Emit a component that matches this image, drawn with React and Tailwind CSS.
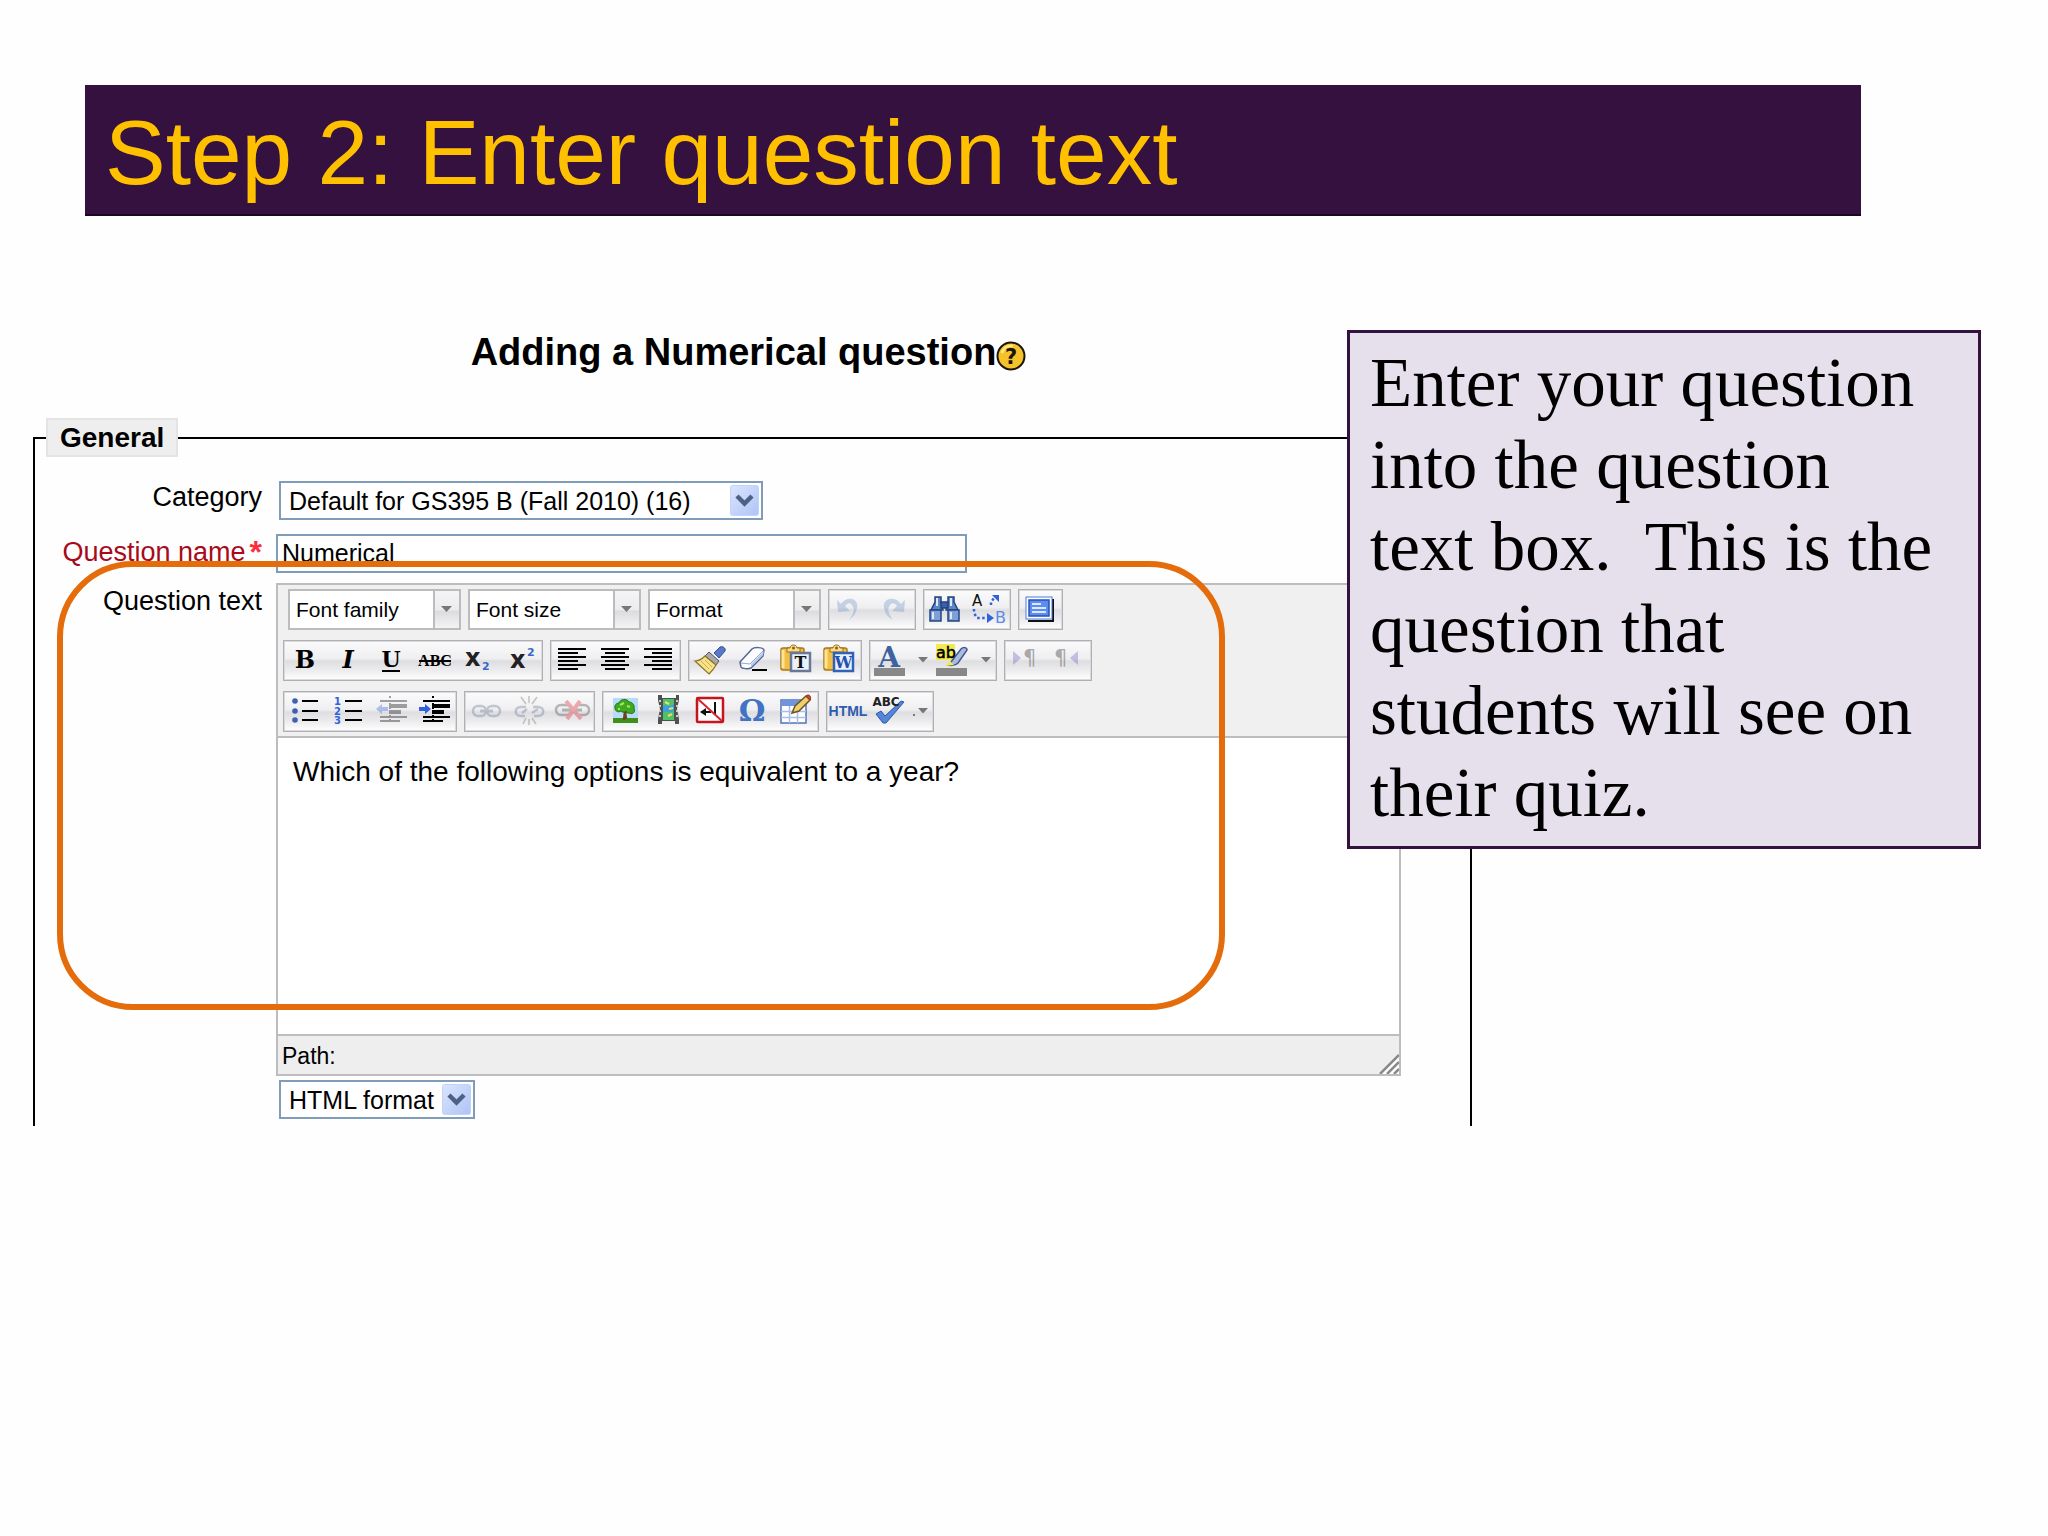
import React from "react";

const BLUE = "#3a66c8";

function Icon({ children, faded }) {
  return (
    <svg viewBox="0 0 43 39" className={faded ? "h-[39px] w-[43px] opacity-35" : "h-[39px] w-[43px]"} aria-hidden="true">
      {children}
    </svg>
  );
}

function Tool({ label, children, faded }) {
  return (
    <button type="button" aria-label={label} title={label} className="block">
      <Icon faded={faded}>{children}</Icon>
    </button>
  );
}

function MoreArrow({ label, dot }) {
  return (
    <button type="button" aria-label={label} className="block">
      <svg viewBox="0 0 20 39" className="h-[39px] w-5" aria-hidden="true">
        {dot && <rect x="0" y="22" width="2" height="2" fill="#777" />}
        <path d="M5 16h10l-5 5.5z" fill="#777" />
      </svg>
    </button>
  );
}

function Group({ children }) {
  return (
    <div className="flex border border-[#b0b0b4] bg-[linear-gradient(#fbfbfc_0%,#efeff1_45%,#dedee2_52%,#ececee_75%,#ffffff_100%)] shadow-[inset_0_0_0_1px_#dadade]">
      {children}
    </div>
  );
}

function ListBox({ label }) {
  return (
    <div className="relative w-[173px]">
      <select
        aria-label={label}
        className="h-[41px] w-full appearance-none border-2 border-[#bcbcc0] bg-white pl-1.5 text-[21px] text-black"
      >
        <option>{label}</option>
      </select>
      <svg viewBox="0 0 26 37" className="pointer-events-none absolute top-0.5 right-0.5 h-[37px] w-[26px] bg-[linear-gradient(#f4f4f5_0%,#ececee_50%,#dcdce0_55%,#f4f4f5_100%)]" aria-hidden="true">
        <rect width="2" height="37" fill="#bcbcc0" />
        <path d="M8 15h11l-5.500 6z" fill="#777" />
      </svg>
    </div>
  );
}

function XpSelect({ id, label, value, className }) {
  return (
    <div className={className}>
      <select
        id={id}
        aria-label={label}
        className="h-[39px] w-full appearance-none border-2 border-[#7f9db9] bg-white pl-2 text-[25px] text-black"
      >
        <option>{value}</option>
      </select>
      <svg viewBox="0 0 29 31" className="pointer-events-none absolute top-1 right-1 h-[31px] w-[29px]" aria-hidden="true">
        <defs>
          <linearGradient id={id + "-g"} x1="0" y1="0" x2="1" y2="1">
            <stop offset="0" stopColor="#dbe5fe" />
            <stop offset="1" stopColor="#aec3f6" />
          </linearGradient>
        </defs>
        <rect x="0.5" y="0.5" width="28" height="30" rx="2" fill={"url(#" + id + "-g)"} stroke="#c3d2f8" />
        <path d="M7 11l7.500 7.500L22 11" fill="none" stroke="#4d6185" strokeWidth="4.500" />
      </svg>
    </div>
  );
}

const slab = '"DejaVu Serif", serif';
const heavy = '"DejaVu Sans", sans-serif';

function AlignIcon({ shorts }) {
  return (
    <g fill="#000">
      {[7, 15, 23].map((y) => (
        <rect key={y} x="7" y={y} width="28" height="2" />
      ))}
      {[11, 19, 27].map((y) => (
        <rect key={y} x={shorts} y={y} width="20" height="2" />
      ))}
    </g>
  );
}

function IndentLines({ arrow }) {
  return (
    <g>
      <g fill="#000">
        <rect x="10" y="8" width="27" height="2" />
        <rect x="19" y="12" width="18" height="4" />
        <rect x="19" y="18" width="12" height="4" />
        <rect x="10" y="24" width="27" height="2" />
        <rect x="10" y="28" width="20" height="2" />
        <path d="M20 4v3M20 11v20" stroke="#000" strokeWidth="2" strokeDasharray="2 2" />
      </g>
      <path d={arrow} fill="#2f62dc" />
    </g>
  );
}

function ChainLinks() {
  return (
    <g fill="none" stroke="#66748f" strokeWidth="2.500">
      <rect x="8" y="14" width="13" height="10" rx="5" />
      <rect x="22" y="14" width="13" height="10" rx="5" />
      <path d="M15 19h13" strokeWidth="3" />
    </g>
  );
}

function Clipboard({ letter, color, border }) {
  return (
    <g>
      <rect x="6" y="7" width="23" height="22" rx="2" fill="#f1bf45" stroke="#a9781d" strokeWidth="1.500" />
      <path d="M8 9v18" stroke="#ffe59a" strokeWidth="3" />
      <path d="M12 11V7h3c0-4 7-4 7 0h3v4z" fill="#f9dc8c" stroke="#9a6d1a" />
      <circle cx="18.500" cy="7" r="1.500" fill="#8a6014" />
      <rect x="16" y="12" width="19" height="18" fill="#eaf1fb" stroke={border} strokeWidth="2.500" />
      <text x="25.500" y="27" textAnchor="middle" fontFamily={slab} fontWeight="bold" fontSize="16" fill={color}>
        {letter}
      </text>
    </g>
  );
}

function Toolbar() {
  return (
    <div className="flex flex-col gap-[10px] border-b-2 border-[#bdbdc0] bg-[#f0f0f1] pt-1 pb-1 pl-[5px]">
      <div className="flex gap-[7px] pl-[5px]">
        <ListBox label="Font family" />
        <ListBox label="Font size" />
        <ListBox label="Format" />
        <Group>
          <Tool label="Undo" faded>
            <path d="M12 14C18 5 30 8 28 18c-1 6-4 9-8 12 5-7 6-11 3-15-2-3-5-2-7 1l5 5-12 1-1-12z" fill="#7093c8" />
          </Tool>
          <Tool label="Redo" faded>
            <path d="M29 14C23 5 10 8 12 18c1 6 4 9 9 12-5-7-6-11-3-15 2-3 5-2 7 1l-5 5 12 1 1-12z" fill="#7093c8" />
          </Tool>
        </Group>
        <Group>
          <Tool label="Find">
            <g stroke="#23447f" strokeWidth="1.500">
              <path d="M11 7h6v5l2 8H7l4-8zM24 7h6v5l4 8H22l2-8z" fill="#5f86c4" />
              <rect x="17" y="12" width="7" height="6" fill="#3a5fa5" />
              <rect x="6" y="20" width="11" height="11" fill="#7ea0d6" />
              <rect x="24" y="20" width="11" height="11" fill="#7ea0d6" />
            </g>
            <path d="M9 22v7M27 22v7M13 8v8M27 8v8" stroke="#dce8fa" strokeWidth="2" />
          </Tool>
          <Tool label="Find and replace">
            <text x="5" y="16" fontFamily={heavy} fontSize="15" fill="#111">A</text>
            <text x="28" y="33" fontFamily={heavy} fontSize="16" fill="#5c8be8">B</text>
            <path d="M7 19v4l3 5h9M24 15v-3l3-4" fill="none" stroke="#2f62dc" strokeWidth="2.500" strokeDasharray="2.500 2.500" />
            <path d="M20 23l7 5-7 5zM25 5h7v7z" fill="#2f62dc" />
          </Tool>
        </Group>
        <Group>
          <Tool label="Toggle fullscreen mode">
            <path d="M9 31h25V9" fill="none" stroke="#111" strokeWidth="2" />
            <rect x="7" y="7" width="26" height="22" fill="#fff" stroke="#4a7be0" />
            <rect x="10" y="10" width="20" height="16" fill="#5b8df0" stroke="#2552b8" strokeWidth="1.500" />
            <path d="M13 14h9M13 18h14M13 22h14" stroke="#dce8ff" strokeWidth="2" />
          </Tool>
        </Group>
      </div>

      <div className="flex gap-[7px]">
        <Group>
          <Tool label="Bold">
            <text x="21" y="27" textAnchor="middle" fontFamily={slab} fontWeight="bold" fontSize="24">B</text>
          </Tool>
          <Tool label="Italic">
            <text x="21" y="27" textAnchor="middle" fontFamily={slab} fontWeight="bold" fontStyle="italic" fontSize="24">I</text>
          </Tool>
          <Tool label="Underline">
            <text x="21" y="26" textAnchor="middle" fontFamily={slab} fontWeight="bold" fontSize="22">U</text>
            <rect x="12" y="29" width="18" height="2" />
          </Tool>
          <Tool label="Strikethrough">
            <text x="22" y="25" textAnchor="middle" fontFamily='"Liberation Serif", serif' fontWeight="bold" fontSize="16">ABC</text>
            <rect x="6" y="19" width="32" height="2" />
          </Tool>
          <Tool label="Subscript">
            <text x="9" y="25" fontFamily={heavy} fontWeight="bold" fontSize="24" fill="#222">x</text>
            <text x="26" y="29" fontFamily={heavy} fontWeight="bold" fontSize="11" fill={BLUE}>2</text>
          </Tool>
          <Tool label="Superscript">
            <text x="11" y="27" fontFamily={heavy} fontWeight="bold" fontSize="24" fill="#222">x</text>
            <text x="28" y="15" fontFamily={heavy} fontWeight="bold" fontSize="11" fill={BLUE}>2</text>
          </Tool>
        </Group>
        <Group>
          <Tool label="Align left"><AlignIcon shorts={7} /></Tool>
          <Tool label="Align center"><AlignIcon shorts={11} /></Tool>
          <Tool label="Align right"><AlignIcon shorts={15} /></Tool>
        </Group>
        <Group>
          <Tool label="Cleanup messy code">
            <path d="M25 12l6-6c3-1 6 1 5 4l-6 7z" fill="#5a78c8" stroke="#34509a" />
            <path d="M20 11l10 9-3 4-11-9z" fill="#a8a9b0" stroke="#555" />
            <path d="M16 15l11 9c-2 4-5 7-7 9L6 20c4 0 7-2 10-5z" fill="#f7e28c" stroke="#8c7424" strokeWidth="1.200" />
            <path d="M12 20l8 8M16 19l7 7" stroke="#cdae4a" />
          </Tool>
          <Tool label="Remove formatting">
            <path d="M8 21L20 8c2-2 11-2 12 1l-1 6-12 12c-2 1-9 1-10-1z" fill="#fdfdff" stroke="#566795" strokeWidth="1.500" strokeLinejoin="round" />
            <path d="M19 26l12-12 1-4-13 13z" fill="#b7c8ee" />
            <path d="M9 22l9 1 13-13" fill="none" stroke="#91a7d6" />
            <rect x="20" y="28" width="15" height="2" />
          </Tool>
          <Tool label="Paste as plain text"><Clipboard letter="T" color="#111" border="#6a7896" /></Tool>
          <Tool label="Paste from Word"><Clipboard letter="W" color="#2450ae" border="#2f62b8" /></Tool>
        </Group>
        <Group>
          <Tool label="Text color">
            <text x="19" y="26" textAnchor="middle" fontFamily={slab} fontWeight="bold" fontSize="28" fill="#3c629f">A</text>
            <rect x="4" y="27" width="31" height="8" fill="#888" />
          </Tool>
          <MoreArrow label="More text colors" />
          <Tool label="Background color">
            <rect x="3" y="3" width="19" height="16" fill="#f3ea4e" />
            <path d="M18 21L28 8c2-2 6-2 6 1L25 22c-2 2-7 3-10 2z" fill="#a9bce6" stroke="#47598c" strokeWidth="1.500" />
            <path d="M12 25l5-5 4 4z" fill="#f3ea4e" />
            <text x="3" y="17" fontFamily={heavy} fontSize="16" fill="#000" stroke="#000" strokeWidth="0.500">ab</text>
            <rect x="3" y="27" width="31" height="8" fill="#888" />
          </Tool>
          <MoreArrow label="More background colors" />
        </Group>
        <Group>
          <Tool label="Left to right" faded>
            <path d="M8 10l8 7-8 7z" fill="#6a62c0" />
            <text x="18" y="24" fontFamily={heavy} fontSize="21" fill="#222">¶</text>
          </Tool>
          <Tool label="Right to left" faded>
            <path d="M30 10l-8 7 8 7z" fill="#6a62c0" />
            <text x="6" y="24" fontFamily={heavy} fontSize="21" fill="#222">¶</text>
          </Tool>
        </Group>
      </div>

      <div className="flex gap-[7px]">
        <Group>
          <Tool label="Bulleted list">
            {[9, 19, 28].map((y) => (
              <g key={y}>
                <circle cx="11" cy={y} r="2.800" fill="#3d60b0" />
                <rect x="18" y={y - 1} width="16" height="2" />
              </g>
            ))}
          </Tool>
          <Tool label="Numbered list">
            {[9, 19, 28].map((y, i) => (
              <g key={y}>
                <text x="7" y={y + 4} fontFamily={heavy} fontWeight="bold" fontSize="10" fill="#2f62dc">{i + 1}</text>
                <rect x="18" y={y - 1} width="17" height="2" />
              </g>
            ))}
          </Tool>
          <Tool label="Outdent" faded><IndentLines arrow="M6 17l6-5v3h6v4h-6v3z" /></Tool>
          <Tool label="Indent"><IndentLines arrow="M18 17l-6-5v3H6v4h6v3z" /></Tool>
        </Group>
        <Group>
          <Tool label="Insert link" faded><ChainLinks /></Tool>
          <Tool label="Unlink" faded>
            <g fill="none" stroke="#66748f" strokeWidth="2.500">
              <path d="M18 15h-5c-7 0-7 9 0 9h4M25 15h5c7 0 7 9 0 9h-4" />
              <path d="M19 17l-5 4M24 21l6-4" />
            </g>
            <path d="M21 4v7M13 5l5 7M29 5l-5 7M21 27v6M15 32l3-6M28 32l-4-6" stroke="#666" strokeWidth="1.500" />
          </Tool>
          <Tool label="Prevent automatic linking" faded>
            <g fill="none" stroke="#444" strokeWidth="2.500">
              <rect x="5" y="13" width="15" height="10" rx="5" />
              <rect x="23" y="13" width="15" height="10" rx="5" />
              <path d="M11 18h20" strokeWidth="3" />
            </g>
            <path d="M15 9l15 18M29 9L16 27" stroke="#e0202c" strokeWidth="4" />
          </Tool>
        </Group>
        <Group>
          <Tool label="Insert image">
            <rect x="10" y="6" width="25" height="25" fill="#b6dcfa" />
            <rect x="10" y="26" width="25" height="5" fill="#3f8f1c" />
            <path d="M21 28l1-8-5-4M22 21l6-4M23 27l-1-7" stroke="#6b4320" strokeWidth="2.500" fill="none" />
            <path d="M12 16c-1-4 3-5 4-5 1-4 8-5 10-1 4 0 6 4 5 7 2 3-2 6-4 4-2 1-4-1-4-2-2 2-5 1-5 0-3 2-6 0-6-3z" fill="#3fa81e" stroke="#25710f" />
            <path d="M17 13l4-2M24 14l3 1M15 17h2" stroke="#a6e466" strokeWidth="2" />
          </Tool>
          <Tool label="Insert media">
            <path d="M12 3h4v3h14V3h3v5l-2 9 2 10v5h-4v-3H16v3h-4v-5l2-10-2-9z" fill="#4b5250" />
            <rect x="17" y="7" width="11" height="21" fill="#51c06b" />
            <path d="M17 14c4-3 5 3 11-2v7c-5 3-7-1-11 2z" fill="#3d9fe0" />
            <path d="M19 10l4 2M22 24l4-2M23 17l4-1" stroke="#e5e35a" strokeWidth="2" />
            <path d="M14 8v20M31 8v20" stroke="#c8cccb" strokeWidth="2" strokeDasharray="2 3" />
          </Tool>
          <Tool label="Insert non-breaking space">
            <rect x="8" y="6" width="26" height="24" rx="1" fill="#fff" stroke="#c4161c" strokeWidth="2.500" />
            <path d="M26 10v12M12 20h10" fill="none" stroke="#111" strokeWidth="2" />
            <path d="M11 20l6-4v8z" fill="#111" />
            <path d="M9 7l24 22" stroke="#d8232a" strokeWidth="2" />
          </Tool>
          <Tool label="Insert custom character">
            <text x="20" y="29" textAnchor="middle" fontFamily={slab} fontWeight="bold" fontSize="30" fill="#4172c4">Ω</text>
          </Tool>
          <Tool label="Edit table">
            <rect x="6" y="8" width="25" height="23" fill="#fff" stroke="#5374b8" strokeWidth="1.500" />
            <rect x="7" y="9" width="23" height="5" fill="#6d96de" />
            <path d="M6 19.500h25M6 25.500h25M14.500 14v17M22.500 14v17" stroke="#a8c0e8" strokeWidth="1.500" />
            <path d="M17 21l3-7L31 4l4 4-11 11z" fill="#f0cf6c" stroke="#6b5623" strokeWidth="1.500" />
            <path d="M31 4c3-3 6 1 4 4z" fill="#c64a32" stroke="#8c3020" />
          </Tool>
        </Group>
        <Group>
          <Tool label="Edit HTML source">
            <text x="21" y="24" textAnchor="middle" fontFamily='"Liberation Sans", sans-serif' fontWeight="bold" fontSize="14" fill="#2f5cae">HTML</text>
          </Tool>
          <Tool label="Toggle spellchecker">
            <path d="M6 22l5-3 4 5L31 9l3 1-18 21h-3z" fill="#5585d8" stroke="#2c57a8" />
            <text x="16" y="14" textAnchor="middle" fontFamily={heavy} fontWeight="bold" fontSize="12" fill="#222">ABC</text>
          </Tool>
          <MoreArrow label="Spellchecker languages" dot />
        </Group>
      </div>
    </div>
  );
}

function Editor() {
  return (
    <div className="border-2 border-[#bdbdc0] bg-[#f0f0f1]">
      <Toolbar />
      <textarea
        id="question-text"
        className="block h-[296px] w-full resize-none bg-white pt-[18px] pl-[15px] text-[28px] leading-8 text-black outline-none"
        defaultValue="Which of the following options is equivalent to a year?"
      />
      <div className="flex h-10 items-end justify-between border-t-2 border-[#bdbdc0] bg-[#eeeeee]">
        <span className="pb-1 pl-1 text-[23px] leading-7">Path:</span>
        <svg viewBox="0 0 20 20" className="h-5 w-5" aria-hidden="true">
          <path d="M20 0V20H0z" fill="#fff" />
          <path d="M1 20L20 1M8 20L20 8M15 20l5-5" stroke="#8a8a8a" strokeWidth="2.500" />
        </svg>
      </div>
    </div>
  );
}

export default function App() {
  return (
    <div className="min-h-screen bg-[#fefefe] pt-[85px] font-['Liberation_Sans',Arial,sans-serif] text-black">
      <header className="mr-[187px] ml-[85px] border-b-2 border-[#1d0527] bg-[#351140] pt-4 pb-[9px] pl-5">
        <h1 className="text-[91px] leading-[104px] text-[#ffc000]">Step 2: Enter question text</h1>
      </header>

      <main className="relative pt-28">
        <form className="mr-[576px] ml-[33px]">
          <h2 className="flex items-center justify-center pr-2 text-[38px] leading-[48px] font-bold">
            Adding a Numerical question
            <button type="button" aria-label="Help" className="mt-2">
              <svg viewBox="0 0 30 30" className="h-[30px] w-[30px]" aria-hidden="true">
                <circle cx="15" cy="15" r="13.500" fill="#f5c22b" stroke="#1c1606" strokeWidth="2" />
                <path d="M6 12c1-5 6-8 11-7" fill="none" stroke="#ffe88a" strokeWidth="2.500" />
                <text x="15" y="23" textAnchor="middle" fontFamily={heavy} fontWeight="bold" fontSize="21" fill="#1a1405">?</text>
              </svg>
            </button>
          </h2>

          <fieldset className="mt-[42px] border-2 border-b-0 border-black pr-[69px] pb-[7px] pl-[11px]">
            <legend className="border-2 border-[#e4e4e4] bg-[#eeeeee] px-3 text-[28px] leading-[35px] font-bold">General</legend>
            <div className="grid grid-cols-[216px_minmax(0,1fr)] gap-x-[14px] pt-6 text-[27px] leading-8">
              <label htmlFor="category" className="text-right">Category</label>
              <XpSelect id="category" label="Category" value="Default for GS395 B (Fall 2010) (16)" className="relative mb-[14px] ml-[3px] w-[484px]" />

              <label htmlFor="question-name" className="flex justify-end gap-1 pt-0.5 text-[#a80a1c]">
                Question name<span className="text-[32px] font-bold text-[#f8303c]">*</span>
              </label>
              <input
                id="question-name"
                type="text"
                defaultValue="Numerical"
                className="mb-[10px] h-[39px] w-[691px] border-2 border-[#7f9db9] bg-white pl-1 text-[25px] outline-none"
              />

              <label htmlFor="question-text" className="pt-0.5 text-right">Question text</label>
              <div>
                <Editor />
                <XpSelect id="format" label="Text format" value="HTML format" className="relative mt-1 ml-[3px] w-[196px]" />
              </div>
            </div>
          </fieldset>
        </form>

        <div className="pointer-events-none absolute top-[345px] right-[823px] left-[57px] h-[449px] rounded-[76px] border-[6px] border-[#e46c0a]" />

        <aside className="absolute top-[114px] right-[67px] w-[634px] border-[3px] border-[#351140] bg-[#e6e0ec] pt-[9px] pr-9 pb-3 pl-5 font-['Liberation_Serif','Times_New_Roman',serif] text-[69px] leading-[82px]">
          Enter your question into the question text box.&nbsp; This is the question that students will see on their quiz.
        </aside>
      </main>
    </div>
  );
}
